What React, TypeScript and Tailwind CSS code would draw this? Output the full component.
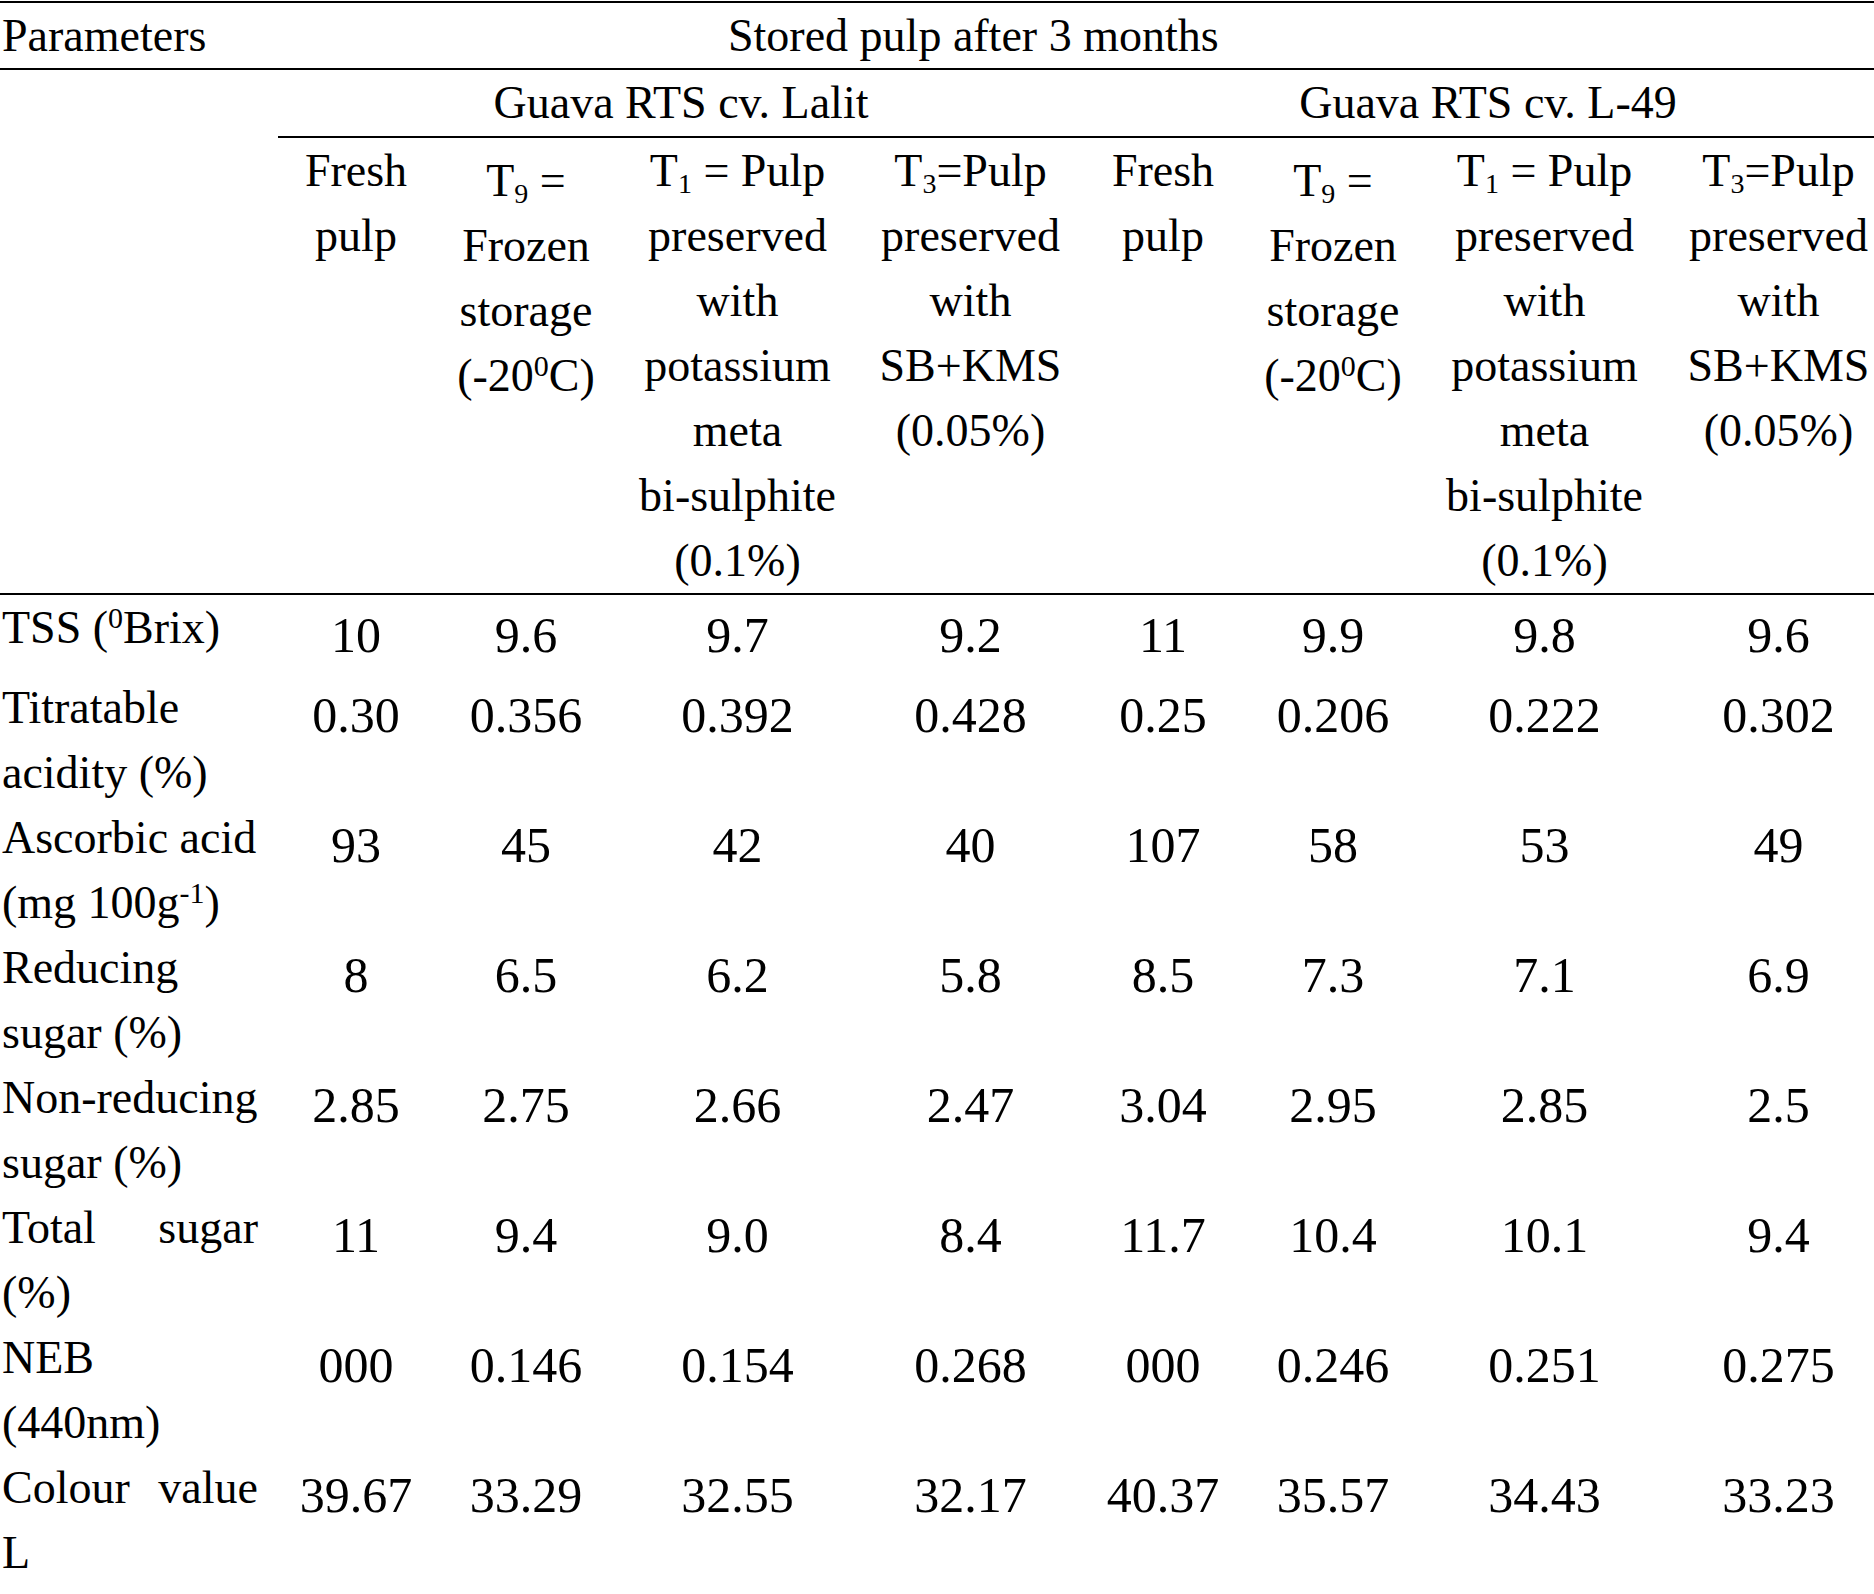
import React from "react";

const cols = "grid-cols-[278px_156px_184px_239px_227px_158px_182px_241px_227px]";

type Row = { label: React.ReactNode; justify?: boolean; values: string[] };

const rows: Row[] = [
  {
    label: (
      <>
        TSS (<sup className="text-[30px]">0</sup>Brix)
      </>
    ),
    values: ["10", "9.6", "9.7", "9.2", "11", "9.9", "9.8", "9.6"],
  },
  {
    label: (
      <>
        Titratable
        <br />
        acidity (%)
      </>
    ),
    values: ["0.30", "0.356", "0.392", "0.428", "0.25", "0.206", "0.222", "0.302"],
  },
  {
    label: (
      <>
        Ascorbic acid
        <br />
        (mg 100g<sup className="text-[30px]">-1</sup>)
      </>
    ),
    values: ["93", "45", "42", "40", "107", "58", "53", "49"],
  },
  {
    label: (
      <>
        Reducing
        <br />
        sugar (%)
      </>
    ),
    values: ["8", "6.5", "6.2", "5.8", "8.5", "7.3", "7.1", "6.9"],
  },
  {
    label: (
      <>
        Non-reducing
        <br />
        sugar (%)
      </>
    ),
    values: ["2.85", "2.75", "2.66", "2.47", "3.04", "2.95", "2.85", "2.5"],
  },
  {
    label: "Total sugar (%)",
    justify: true,
    values: ["11", "9.4", "9.0", "8.4", "11.7", "10.4", "10.1", "9.4"],
  },
  {
    label: (
      <>
        NEB
        <br />
        (440nm)
      </>
    ),
    values: ["000", "0.146", "0.154", "0.268", "000", "0.246", "0.251", "0.275"],
  },
  {
    label: "Colour value L",
    justify: true,
    values: ["39.67", "33.29", "32.55", "32.17", "40.37", "35.57", "34.43", "33.23"],
  },
];

function Sub({ children }: { children: React.ReactNode }) {
  return <sub className="text-[28px]">{children}</sub>;
}

function TreatmentHeaders() {
  return (
    <>
      <div className="text-center">
        Fresh
        <br />
        pulp
      </div>
      <div className="text-center pt-[10px]">
        T<Sub>9</Sub> =
        <br />
        Frozen
        <br />
        storage
        <br />
        (-20<sup className="text-[30px]">0</sup>C)
      </div>
      <div className="text-center">
        T<Sub>1</Sub> = Pulp
        <br />
        preserved
        <br />
        with
        <br />
        potassium
        <br />
        meta
        <br />
        bi-sulphite
        <br />
        (0.1%)
      </div>
      <div className="text-center">
        T<Sub>3</Sub>=Pulp
        <br />
        preserved
        <br />
        with
        <br />
        SB+KMS
        <br />
        (0.05%)
      </div>
    </>
  );
}

export default function App() {
  return (
    <div className="w-[1874px] h-[1594px] overflow-hidden bg-white text-black">
      <div
        className="w-[1892px] text-[46px] leading-[65px] text-black"
        style={{ fontFamily: '"Liberation Serif", "Times New Roman", serif' }}
      >
        <div className="h-px" />
        <div className="h-[2px] bg-black" />

        {/* Title row */}
        <div className={`grid ${cols} h-[65px]`}>
          <div className="pl-[2px]">Parameters</div>
          <div className="col-span-8 pl-[450px]">Stored pulp after 3 months</div>
        </div>
        <div className="h-[2px] bg-black" />

        {/* Variety row */}
        <div className={`grid ${cols} h-[66px]`}>
          <div />
          <div className="col-span-4 text-center">Guava RTS cv. Lalit</div>
          <div className="col-span-4 text-center">Guava RTS cv. L-49</div>
        </div>
        <div className={`grid ${cols}`}>
          <div />
          <div className="col-span-8 h-[2px] bg-black" />
        </div>

        {/* Treatment header row */}
        <div className={`grid ${cols} h-[455px]`}>
          <div />
          <TreatmentHeaders />
          <TreatmentHeaders />
        </div>
        <div className="h-[2px] bg-black" />

        {/* Data rows */}
        {rows.map((r, i) => (
          <div key={i} className={`grid ${cols} min-h-[80px]`}>
            <div
              className={`pl-[2px] pr-[20px] ${r.justify ? "text-justify" : "text-left"}`}
            >
              {r.label}
            </div>
            {r.values.map((v, j) => (
              <div key={j} className="text-center text-[50px] leading-[80px]">
                {v}
              </div>
            ))}
          </div>
        ))}
      </div>
    </div>
  );
}
